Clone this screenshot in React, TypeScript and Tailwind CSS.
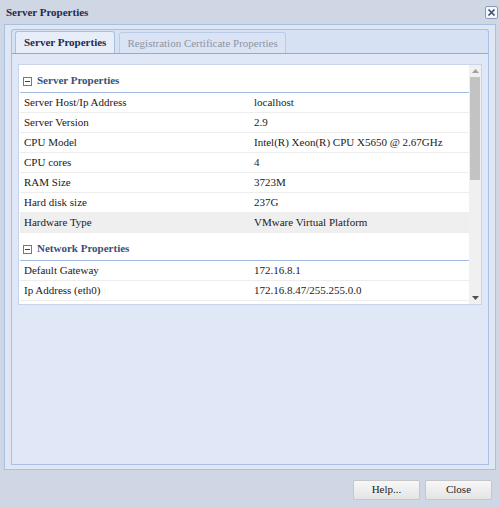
import React from 'react';

const font = "font-['Liberation_Serif','DejaVu_Serif',serif]";

const serverRows: [string, string][] = [
  ['Server Host/Ip Address', 'localhost'],
  ['Server Version', '2.9'],
  ['CPU Model', 'Intel(R) Xeon(R) CPU X5650 @ 2.67GHz'],
  ['CPU cores', '4'],
  ['RAM Size', '3723M'],
  ['Hard disk size', '237G'],
  ['Hardware Type', 'VMware Virtual Platform'],
];

const networkRows: [string, string][] = [
  ['Default Gateway', '172.16.8.1'],
  ['Ip Address (eth0)', '172.16.8.47/255.255.0.0'],
];

const GroupHeader = ({ title }: { title: string }) => (
  <div className="flex h-[28px] items-end pb-[4px] pl-[3px] border-b border-[#a3bbe0]">
    <span className="mb-[2px] mr-[5px] flex h-[9px] w-[9px] items-center justify-center border border-[#6a7a94] bg-white">
      <span className="h-px w-[5px] bg-[#34425c]" />
    </span>
    <span className={`${font} text-[11px] font-bold text-[#3b5078]`}>{title}</span>
  </div>
);

const Row = ({ label, value, hover }: { label: string; value: string; hover?: boolean }) => (
  <div className={`${font} flex h-[20px] items-center border-b border-[#ededed] text-[11px] text-[#1a1a1a] ${hover ? 'bg-[#efefef]' : ''}`}>
    <span className="w-[234px] pl-[4px]">{label}</span>
    <span>{value}</span>
  </div>
);

export default function App() {
  return (
    <div className={`${font} flex h-[507px] w-[500px] flex-col bg-[#cfd7e5]`}>
      {/* Title bar */}
      <div className="flex h-[24px] items-center justify-between pl-[6px] pr-[2px]">
        <span className={`${font} text-[11px] font-bold text-[#1e2c4c]`}>Server Properties</span>
        <button className="flex h-[13px] w-[13px] items-center justify-center rounded-[2px] border border-[#8a9ab6] bg-[#f4f6fa]">
          <svg width="9" height="9" viewBox="0 0 9 9">
            <path d="M1.5 1.5 L7.5 7.5 M7.5 1.5 L1.5 7.5" stroke="#3a4a6a" strokeWidth="1.6" />
          </svg>
        </button>
      </div>

      {/* Body */}
      <div className="mx-[4px] h-[446px] border border-[#a9c0e4] bg-[#dfe6f4] px-[6px] pt-[4px]">
        {/* Tab strip */}
        <div className="flex h-[24px] items-end gap-[4px] rounded-t-[3px] border border-b-0 border-[#a9c0e4] bg-[#d6e1f3] pl-[3px]">
          <div className={`${font} flex h-[22px] items-center rounded-t-[3px] border border-b-0 border-[#a9c0e4] bg-[#e8eef9] px-[8px] text-[11px] font-bold text-[#1e2c4c]`}>
            Server Properties
          </div>
          <div className={`${font} flex h-[21px] items-center rounded-t-[3px] border border-b-0 border-[#b9cbe6] bg-[#dae3f3] px-[7px] text-[11px] text-[#8b95a6]`}>
            Registration Certificate Properties
          </div>
        </div>
        <div className="h-[412px] border border-[#a9c0e4] border-t-[#8eaad8] bg-[#e0e7f6] px-[6px] pt-[10px]">
          {/* Grid */}
          <div className="flex h-[241px] border border-[#c7d4ea] bg-white">
            <div className="flex-1 overflow-hidden pl-[1px]">
              <GroupHeader title="Server Properties" />
              {serverRows.map(([l, v], i) => (
                <Row key={l} label={l} value={v} hover={i === serverRows.length - 1} />
              ))}
              <GroupHeader title="Network Properties" />
              {networkRows.map(([l, v]) => (
                <Row key={l} label={l} value={v} />
              ))}
            </div>
            <div className="flex w-[12px] flex-col items-center bg-[#f0f0f0]">
              <div className="flex h-[12px] items-center justify-center">
                <svg width="7" height="4" viewBox="0 0 7 4"><path d="M0 4 L3.5 0 L7 4 Z" fill="#a0a0a0" /></svg>
              </div>
              <div className="h-[103px] w-[10px] bg-[#c3c3c3]" />
              <div className="flex-1" />
              <div className="flex h-[12px] items-center justify-center">
                <svg width="7" height="4" viewBox="0 0 7 4"><path d="M0 0 L7 0 L3.5 4 Z" fill="#505050" /></svg>
              </div>
            </div>
          </div>
        </div>
      </div>

      {/* Footer */}
      <div className="flex flex-1 items-center justify-end gap-[5px] pr-[8px] pt-[2px]">
        <button className={`${font} h-[20px] w-[67px] rounded-[2px] border border-[#c6c6c6] bg-gradient-to-b from-[#f8f8f8] to-[#e4e4e4] text-[11px] text-[#222]`}>
          Help...
        </button>
        <button className={`${font} h-[20px] w-[67px] rounded-[2px] border border-[#c6c6c6] bg-gradient-to-b from-[#f8f8f8] to-[#e4e4e4] text-[11px] text-[#222]`}>
          Close
        </button>
      </div>
    </div>
  );
}
